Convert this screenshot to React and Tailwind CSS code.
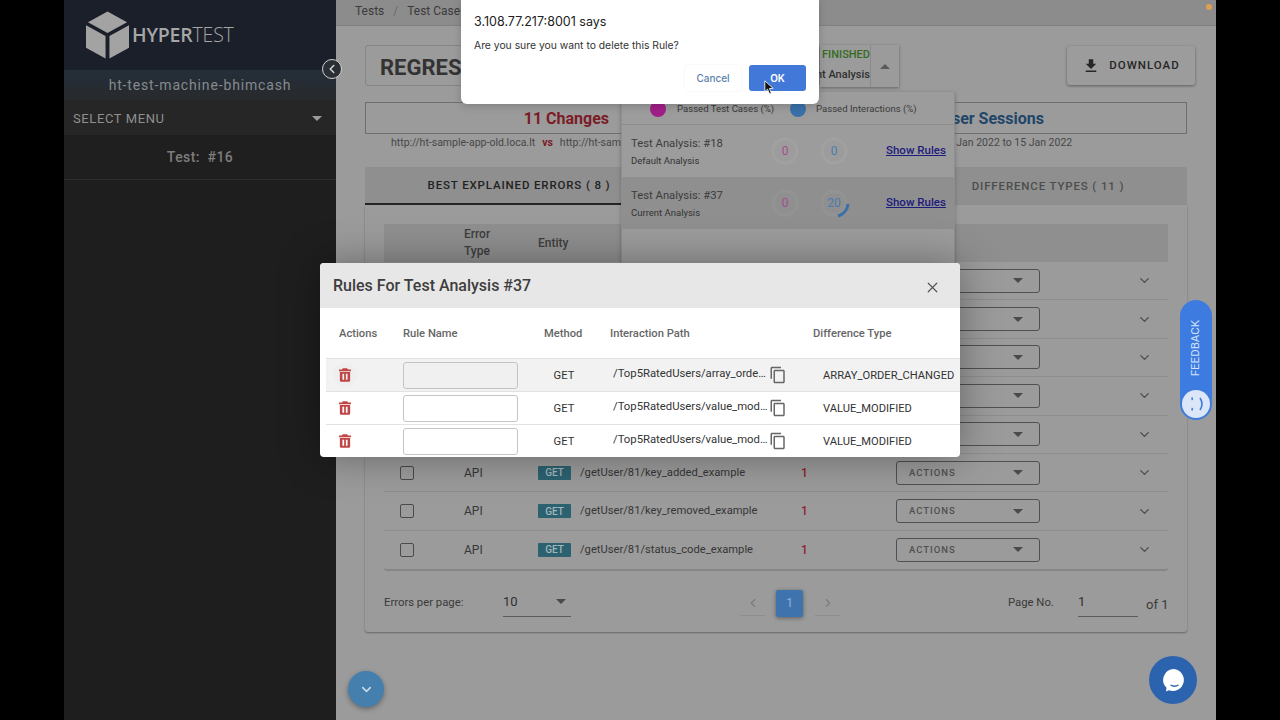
import React from "react";
import { MdContentCopy, MdFileDownload } from "react-icons/md";
import { ChevronDown, ChevronLeft, ChevronRight, X } from "lucide-react";

const Caret = ({ className = "", up = false }) => (
  <svg viewBox="0 0 10 5" className={`w-[10px] h-[5px] ${className}`} fill="currentColor">
    <path d={up ? "M0 5 L5 0 L10 5Z" : "M0 0 L10 0 L5 5Z"} />
  </svg>
);

const Trash = () => (
  <svg viewBox="0 0 14 16" className="w-[12px] h-[14px]">
    <path fillRule="evenodd" fill="#c04545" d="M4.5 0 H9.5 L10.5 1.5 H14 V3.5 H0 V1.5 H3.5Z M1 4.5 H13 V14.5 A1.5 1.5 0 0 1 11.5 16 H2.5 A1.5 1.5 0 0 1 1 14.5Z M4 6.5 V13.5 H6 V6.5Z M8 6.5 V13.5 H10 V6.5Z" />
  </svg>
);

const rows = [
  null,
  null,
  null,
  null,
  null,
  "/getUser/81/key_added_example",
  "/getUser/81/key_removed_example",
  "/getUser/81/status_code_example",
];

const rules = [
  { path: "/Top5RatedUsers/array_order_changed", type: "ARRAY_ORDER_CHANGED", hover: true },
  { path: "/Top5RatedUsers/value_modified_one", type: "VALUE_MODIFIED" },
  { path: "/Top5RatedUsers/value_modified_two", type: "VALUE_MODIFIED" },
];

function Ring({ value, color, arc, track }) {
  return (
    <div className="relative w-[28px] h-[28px] flex items-center justify-center">
      <svg viewBox="0 0 28 28" className="absolute inset-0 w-[28px] h-[28px] overflow-visible" fill="none">
        <circle cx="14" cy="14" r="12" stroke={track} strokeWidth="3" />
        {arc && <path d="M28 15 A14 14 0 0 1 18 27" stroke="#3a70a8" strokeWidth="3" />}
      </svg>
      <span className={`text-[12px] ${color}`}>{value}</span>
    </div>
  );
}

function Sidebar() {
  return (
    <aside className="w-[272px] shrink-0 bg-[#1e1e1e] flex flex-col relative text-[#9a9a9a]">
      <div className="h-[70px] bg-[#1a1f2a] flex items-start pl-[22px] pt-[11px] gap-[3px]">
        <svg viewBox="0 0 44 48" className="w-[43px] h-[48px]">
          <path d="M22 0 L42 11 L22 22 L2 11Z" fill="#a3a3a3" />
          <path d="M0 14 L20 25 L20 48 L0 37Z" fill="#a3a3a3" />
          <path d="M24 25 L44 14 L44 37 L24 48Z" fill="#a3a3a3" />
        </svg>
        <div className="mt-[12px] text-[19.5px] leading-[24px] font-['Open_Sans',sans-serif] tracking-[-0.2px] text-[#a6a6a6]">
          <span className="font-semibold">HYPER</span>
          <span className="font-light">TEST</span>
        </div>
      </div>
      <div className="h-[30px] bg-gradient-to-b from-[#252e3a] to-[#282a2c] flex items-center justify-center text-[14px] tracking-[0.85px] text-[#858a8f]">
        ht-test-machine-bhimcash
      </div>
      <div className="h-[35px] bg-[#262626] flex items-center justify-between pl-[9px] pr-[14px] pt-[2px] text-[13px] tracking-[0.6px] text-[#8f8f8f]">
        <span>SELECT MENU</span>
        <Caret className="text-[#9c9c9c]" />
      </div>
      <div className="h-[45px] bg-[#1f1f1f] rounded-t-[4px] border-b border-[#2e2e2e] flex items-center justify-center text-[14px] font-medium tracking-[0.4px] text-[#7d7d7d] whitespace-pre">
        Test:  #16
      </div>
      <button className="absolute right-[-6px] top-[59px] z-10 w-[20px] h-[20px] rounded-full bg-[#2a2f36] border border-[#d0d0d0] flex items-center justify-center text-[#d8d8d8]">
        <ChevronLeft size={14} strokeWidth={2.5} />
      </button>
    </aside>
  );
}

function ErrorsTable() {
  return (
    <div className="bg-[#9b9b9b] rounded-b-[3px] shadow-[0_1px_2px_rgba(0,0,0,.35)] h-[427px] px-[19px] pt-[19px]">
      <div className="h-[38px] bg-[#8f8f8f] grid grid-cols-[80px_74px_1fr] items-center text-[12px] font-medium text-[#3e3e3e] leading-[17px]">
        <span />
        <span className="w-[30px]">Error Type</span>
        <span>Entity</span>
      </div>
      <div className="border-b-2 border-[#868686] rounded-b-[3px]">
        {rows.map((r, i) => (
          <div key={i} className={`h-[38.4px] grid grid-cols-[80px_74px_263px_95px_241px_1fr] items-center text-[12px] text-[#363636] ${i < rows.length - 1 ? "border-b border-[#8e8e8e]" : ""}`}>
            <span className="pl-[16px]">
              {r && <span className="block w-[14px] h-[14px] rounded-[2px] border-[1.5px] border-[#4a4a4a]" />}
            </span>
            <span>{r && "API"}</span>
            <span className="flex items-center gap-[9px]">
              {r && <span className="w-[33px] h-[14px] rounded-[1px] bg-[#2c6270] text-[#a2b7bb] text-[10px] font-medium flex items-center justify-center">GET</span>}
              {r && <span className="whitespace-nowrap text-[11.2px] pt-[1px]">{r}</span>}
            </span>
            <span className="text-[#8c1f2b] font-medium">{r && "1"}</span>
            <span>
              <span className="w-[144px] h-[24px] rounded-[3px] border border-[#505050] flex items-center justify-between pl-[12px] pr-[16px] text-[9.5px] font-medium tracking-[1px] text-[#505050]">
                ACTIONS
                <Caret className="text-[#4a4a4a] w-[8px] h-[4px]" />
              </span>
            </span>
            <span className="text-[#4a4a4a]"><ChevronDown size={15} /></span>
          </div>
        ))}
      </div>
      <div className="flex items-center mt-[14px] h-[36px] text-[11.3px] text-[#3a3a3a]">
        <span className="w-[119px] pt-[1px]">Errors per page:</span>
        <span className="w-[68px] h-[27px] border-b border-[#5c5c5c] flex items-center justify-between pr-[5px] pb-[2px] text-[13px] text-[#2f2f2f]">
          10
          <Caret className="text-[#4a4a4a] w-[8px] h-[4px]" />
        </span>
        <span className="ml-[169px] w-[25px] h-[25px] border-b border-[#8e8e8e] flex items-center justify-center text-[#7c7c7c]"><ChevronLeft size={14} /></span>
        <span className="ml-[11px] w-[27px] h-[27px] rounded-[2px] bg-[#3f73ae] shadow-[0_1px_4px_rgba(0,0,0,.4)] text-[#8fb0d4] flex items-center justify-center text-[12px]">1</span>
        <span className="ml-[12px] w-[25px] h-[25px] border-b border-[#8e8e8e] flex items-center justify-center text-[#7c7c7c]"><ChevronRight size={14} /></span>
        <span className="ml-[168px] w-[70px] pt-[1px] whitespace-nowrap">Page No.</span>
        <span className="w-[60px] h-[27px] border-b border-[#5c5c5c] flex items-center pb-[2px] text-[13px] text-[#2f2f2f]">1</span>
        <span className="ml-[8px] text-[13px] pt-[3px] whitespace-nowrap">of 1</span>
      </div>
    </div>
  );
}

function Main() {
  return (
    <main className="flex-1 bg-[#9b9b9b] flex flex-col relative">
      <div className="h-[26px] bg-[#8c8c8c] border-b border-[#808080] flex items-center pl-[19px] pb-[4px] text-[12px] text-[#3a3a3a] gap-[9px] -mb-px">
        <span>Tests</span>
        <span className="text-[#6a6a6a]">/</span>
        <span>Test Cases</span>
      </div>
      <div className="pl-[29px] pr-[29px] pt-[20px]">
        <div className="flex items-start h-[41px]">
          <div className="w-[455px] h-[41px] rounded-[3px] border border-[#858585] flex items-center pl-[14px] pt-[3px] text-[22px] font-bold text-[#333333]">
            REGRESSION
          </div>
          <div className="w-[79px] h-[42px] shadow-[0_1px_3px_rgba(0,0,0,.35)] flex">
            <div className="w-[50px] flex flex-col items-end text-[11px] font-medium leading-[20px] whitespace-nowrap">
              <span className="text-[#356b1f]">FINISHED</span>
              <span className="text-[#303030]">Current Analysis</span>
            </div>
            <div className="w-[29px] border-l border-[#8a8a8a] flex items-center justify-center">
              <Caret up className="text-[#5a5a5a] w-[8px] h-[4px]" />
            </div>
          </div>
          <button className="ml-[168px] mt-[1px] -mr-[9px] w-[128px] h-[39px] rounded-[3px] bg-[#9c9c9c] shadow-[0_1px_3px_rgba(0,0,0,.4)] flex items-center justify-center gap-[9px] text-[11.5px] font-medium tracking-[1px] text-[#262626]">
            <MdFileDownload size={18} />
            DOWNLOAD
          </button>
        </div>
        <div className="mt-[16px] h-[32px] border border-[#6f6f6f] flex items-center pt-[1px]">
          <span className="w-[243px] text-right text-[16px] font-bold text-[#7b1c27]">11 Changes</span>
          <span className="ml-[250px] w-[185px] text-right text-[16px] font-bold text-[#214668] whitespace-nowrap">User Sessions</span>
        </div>
        <div className="mt-[1px] h-[16px] flex items-center text-[10.5px] text-[#474747] whitespace-nowrap">
          <span className="ml-[26px]">http://ht-sample-app-old.loca.lt</span>
          <span className="mx-[7px] text-[#7b1c27] font-bold">vs</span>
          <span className="w-[61px] overflow-hidden">http://ht-sample-app-new.loca.lt</span>
          <span className="ml-[321px] text-[#474747]">12 Jan 2022 to 15 Jan 2022</span>
        </div>
        <div className="mt-[16px] flex h-[38px] bg-[#8f8f8f] rounded-t-[2px] text-[11.5px] font-medium tracking-[0.85px]">
          <div className="w-[306px] border-b-2 border-[#242424] flex items-center justify-center pl-[2px] pt-[1px] text-[#222222]">BEST EXPLAINED ERRORS ( 8 )</div>
          <div className="w-[238px]" />
          <div className="w-[278px] flex items-center justify-center pt-[1px] text-[#4d4d4d]">DIFFERENCE TYPES ( 11 )</div>
        </div>
        <ErrorsTable />
      </div>
      <span className="absolute top-[4px] right-[4px] w-[6px] h-[6px] rounded-full bg-[#e0a050]" />
      <button className="absolute left-[12px] top-[671px] w-[36px] h-[36px] rounded-full bg-[#457fae] shadow-[0_2px_5px_rgba(0,0,0,.35)] flex items-center justify-center text-[#c9dbe9]">
        <ChevronDown size={15} strokeWidth={2.5} />
      </button>
      <div className="absolute left-[813px] top-[656px] w-[48px] h-[48px] rounded-full bg-[#2b63ae] flex items-center justify-center">
        <svg viewBox="0 0 24 24" className="w-[24px] h-[24px]">
          <path d="M12 1 A11 11 0 1 1 8 22.3 L5 23.5 L5.5 19.8 A11 11 0 0 1 12 1Z" fill="#ffffff" />
          <path d="M9.5 17 Q13.5 19.5 17.5 17" stroke="#2b63ae" strokeWidth="1.4" fill="none" />
        </svg>
      </div>
      <div className="absolute left-[844px] top-[300px] w-[32px] h-[120px] rounded-full bg-[#3d7be0] flex flex-col items-center">
        <span className="mt-[20px] [writing-mode:vertical-rl] rotate-180 text-[11.5px] text-[#d4e3f9]">FEEDBACK</span>
        <span className="absolute bottom-[2px] w-[28px] h-[28px] rounded-full bg-[#dbe6f8] flex items-center justify-center">
          <svg viewBox="0 0 20 20" className="w-[20px] h-[20px]" fill="none" stroke="#3d7be0" strokeWidth="1.6">
            <path d="M14 4 Q18 10 14 16" />
            <path d="M6.5 3.5 Q5.5 4.5 6.5 6" />
            <path d="M6.5 14 Q5.5 15.5 6.5 16.5" />
          </svg>
        </span>
      </div>
    </main>
  );
}

function AnalysisPopover() {
  const items = [
    { t: "Test Analysis: #18", s: "Default Analysis", bg: "", b: "0", arc: false, track: "#a1a1a1" },
    { t: "Test Analysis: #37", s: "Current Analysis", bg: "bg-[#8f8f8f]", b: "20", arc: true, track: "#939393" },
  ];
  return (
    <div className="absolute left-[621px] top-[92px] w-[334px] h-[200px] bg-[#9c9c9c] border-x border-[#8e8e8e] shadow-[0_1px_4px_rgba(0,0,0,.25)] text-[#333333]">
      <div className="h-[33px] border-b border-[#8c8c8c] flex items-center text-[9.6px] text-[#3a3a3a] pl-[28px] pt-[2px]">
        <span className="w-[16px] h-[16px] rounded-full bg-[#a01f87]" />
        <span className="ml-[11px] w-[97px] whitespace-nowrap">Passed Test Cases (%)</span>
        <span className="ml-[16px] w-[16px] h-[16px] rounded-full bg-[#3a70a8]" />
        <span className="ml-[10px] whitespace-nowrap">Passed Interactions (%)</span>
      </div>
      {items.map((it) => (
        <div key={it.t} className={`h-[52px] flex items-center pl-[9px] ${it.bg}`}>
          <div className="w-[140px] pt-[1px]">
            <div className="text-[11.3px] leading-[18px] text-[#3c3c3c]">{it.t}</div>
            <div className="text-[9.5px] leading-[16px] text-[#333333]">{it.s}</div>
          </div>
          <Ring value="0" color="text-[#a34d8f]" track={it.track} />
          <span className="w-[21px]" />
          <Ring value={it.b} color="text-[#4a7cae]" arc={it.arc} track={it.track} />
          <a className="ml-[38px] text-[11.5px] font-medium underline text-[#1c1c7c]">Show Rules</a>
        </div>
      ))}
    </div>
  );
}

function RulesModal() {
  const cols = "grid grid-cols-[77px_141px_66px_203px_1fr] items-center";
  return (
    <div className="absolute left-[320px] top-[263px] w-[640px] h-[194px] rounded-[4px] bg-white shadow-[0_0_40px_rgba(0,0,0,.35)] overflow-hidden">
      <div className="h-[45px] bg-[#e8e7e8] flex items-center justify-between pl-[13px] pr-[19px]">
        <span className="text-[16px] font-medium text-[#3d3d3d]">Rules For Test Analysis #37</span>
        <X size={17} className="text-[#555555] mt-[3px]" strokeWidth={1.7} />
      </div>
      <div className={`${cols} pl-[6px] h-[50px] pt-[3px] text-[11.2px] font-medium text-[#666666]`}>
        <span className="pl-[13px]">Actions</span>
        <span>Rule Name</span>
        <span>Method</span>
        <span>Interaction Path</span>
        <span>Difference Type</span>
      </div>
      {rules.map((r, i) => (
        <div key={i} className={`ml-[6px] ${cols} h-[33px] border-t border-[#e2e2e2] ${r.hover ? "bg-[#f2f2f2]" : ""}`}>
          <span className="pl-[1px]">
            <span className={`ml-[6px] w-[24px] h-[24px] rounded-full flex items-center justify-center ${r.hover ? "bg-[#efefef]" : ""}`}><Trash /></span>
          </span>
          <span className={`w-[115px] h-[27px] rounded-[3px] border border-[#c4c4c4] ${r.hover ? "bg-[#f0f0f0]" : "bg-white"}`} />
          <span className="w-[40px] text-center text-[11.2px] text-[#333333] pt-[2px]">GET</span>
          <span className="flex items-center pl-[3px]">
            <span className="w-[156px] truncate text-[11.3px] text-[#333333] -mt-[2px]">{r.path}</span>
            <MdContentCopy size={18} className="text-[#666666]" />
          </span>
          <span className="pl-[10px] text-[11.15px] text-[#333333] whitespace-nowrap pt-[2px]">{r.type}</span>
        </div>
      ))}
    </div>
  );
}

function AlertDialog() {
  return (
    <div className="absolute left-[461px] top-0 w-[358px] h-[104px] bg-white rounded-b-[6px] shadow-[0_2px_8px_rgba(0,0,0,.18)] font-['Inter',sans-serif] pl-[13px] pr-[13px]">
      <div className="pt-[14px] text-[12.5px] leading-[16px] text-[#222222]">3.108.77.217:8001 says</div>
      <div className="mt-[7px] text-[10.35px] leading-[16px] text-[#333333]">Are you sure you want to delete this Rule?</div>
      <div className="mt-[12px] flex justify-end gap-[8px]">
        <button className="w-[56px] h-[26px] rounded-[3px] bg-white shadow-[0_0_2px_rgba(0,0,0,.08)] text-[10px] font-medium text-[#5a7fae]">Cancel</button>
        <button className="w-[57px] h-[26px] rounded-[3px] bg-[#4279d9] text-[10px] font-semibold text-white">OK</button>
      </div>
    </div>
  );
}

export default function App() {
  return (
    <div className="relative w-[1280px] h-[720px] overflow-hidden bg-black px-[64px] flex font-['Roboto',sans-serif]">
      <Sidebar />
      <Main />
      <AnalysisPopover />
      <RulesModal />
      <AlertDialog />
      <svg viewBox="0 0 12 18" className="absolute left-[764px] top-[80px] w-[10px] h-[15px]">
        <path d="M1 1 L1 14 L4.2 11 L6.5 16.5 L8.8 15.5 L6.5 10.2 L11 10Z" fill="#111111" stroke="#ffffff" strokeWidth="1" />
      </svg>
    </div>
  );
}
